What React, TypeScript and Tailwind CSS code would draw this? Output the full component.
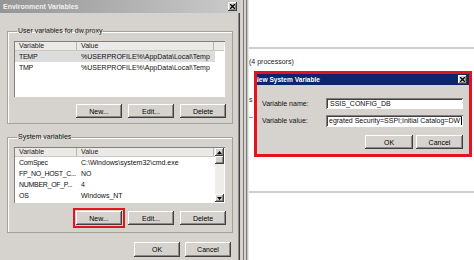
import React from 'react'

const face = 'bg-[#d6d3ce]'
const raised = 'shadow-[inset_-1px_-1px_#404040,inset_1px_1px_#fff,inset_-2px_-2px_#8a8a8a]'
const sunken = 'shadow-[inset_1px_1px_#808080,inset_-1px_-1px_#fff,inset_2px_2px_#404040]'

function Btn({ label, className = '' }: { label: string; className?: string }) {
  return (
    <div className={`flex h-[14px] w-[46px] shrink-0 items-center justify-center ${face} ${raised} text-[7px] leading-none text-black ${className}`}>
      {label}
    </div>
  )
}

function CloseBox({ className = '' }: { className?: string }) {
  return (
    <div className={`flex h-[9px] w-[9px] shrink-0 items-center justify-center ${face} ${raised} ${className}`}>
      <svg width="5" height="5" viewBox="0 0 5 5">
        <path d="M0 0L5 5M5 0L0 5" stroke="#000" strokeWidth="1.3" />
      </svg>
    </div>
  )
}

type Row = [string, string]

function ListView({ rows, selected = -1, scroll = false }: { rows: Row[]; selected?: number; scroll?: boolean }) {
  return (
    <div className="flex h-[56px] w-[211px] bg-white p-px shadow-[inset_1px_1px_#808080,inset_-1px_-1px_#fff]">
      <div className="flex min-w-0 flex-1 flex-col overflow-hidden">
        <div className="flex h-[9px] shrink-0 border-b border-[#c9c7c1] bg-[#eceae6] text-[7px] leading-[8px] text-[#222]">
          <div className="w-[62px] border-r border-[#b8b6b0] pl-[4px]">Variable</div>
          <div className="w-[137px] border-r border-[#b8b6b0] pl-[4px]">Value</div>
        </div>
        {rows.map((r, i) => (
          <div
            key={r[0]}
            className={`flex h-[11px] shrink-0 items-center text-[7px] leading-[10px] text-[#111] ${i === selected ? 'w-[200px] bg-[#dcdcdc]' : ''}`}
          >
            <div className="w-[62px] overflow-hidden whitespace-nowrap pl-[4px] tracking-[-0.3px]">{r[0]}</div>
            <div className="w-[137px] overflow-hidden whitespace-nowrap pl-[4px]">{r[1]}</div>
          </div>
        ))}
      </div>
      {scroll && (
        <div className="flex w-[9px] flex-col bg-[#efede9]">
          <div className={`flex h-[8px] items-center justify-center ${face} ${raised}`}>
            <svg width="5" height="3" viewBox="0 0 5 3"><path d="M2.5 0L5 3H0Z" fill="#000" /></svg>
          </div>
          <div className={`h-[8px] ${face} ${raised}`} />
          <div className="flex-1" />
          <div className={`flex h-[8px] items-center justify-center ${face} ${raised}`}>
            <svg width="5" height="3" viewBox="0 0 5 3"><path d="M0 0H5L2.5 3Z" fill="#000" /></svg>
          </div>
        </div>
      )}
    </div>
  )
}

function Group({ title, className = '', children }: { title: string; className?: string; children: React.ReactNode }) {
  return (
    <fieldset className={`ml-[7px] flex w-[226px] flex-col border border-[#a3a19b] px-[6px] shadow-[inset_1px_1px_#fff] ${className}`}>
      <legend className="ml-[3px] px-px text-[7px] leading-[8px] text-[#111]">{title}</legend>
      {children}
    </fieldset>
  )
}

function EnvDialog() {
  return (
    <div className={`flex h-[260px] w-[240px] shrink-0 flex-col ${face} shadow-[inset_-1px_0_#404040,inset_-2px_0_#8a8a8a]`}>
      <div className="flex h-[13px] shrink-0 items-center justify-between bg-linear-to-r from-[#959595] to-[#cbcbcb] pl-[3px] pr-[3px]">
        <span className="text-[7px] font-bold leading-none text-[#f0f0f0]">Environment Variables</span>
        <CloseBox />
      </div>

      <Group title="User variables for dw.proxy" className="mt-[14px] h-[97px]">
        <div className="mt-[6px]">
          <ListView
            rows={[
              ['TEMP', '%USERPROFILE%\\AppData\\Local\\Temp'],
              ['TMP', '%USERPROFILE%\\AppData\\Local\\Temp'],
            ]}
            selected={0}
          />
        </div>
        <div className="mt-[7px] flex justify-end gap-[6px]">
          <Btn label="New..." />
          <Btn label="Edit..." />
          <Btn label="Delete" />
        </div>
      </Group>

      <Group title="System variables" className="mt-[9px] h-[100px]">
        <div className="mt-[6px]">
          <ListView
            rows={[
              ['ComSpec', 'C:\\Windows\\system32\\cmd.exe'],
              ['FP_NO_HOST_C...', 'NO'],
              ['NUMBER_OF_P...', '4'],
              ['OS', 'Windows_NT'],
            ]}
            scroll
          />
        </div>
        <div className="mt-[8px] flex justify-end gap-[6px]">
          <Btn label="New..." className="outline-2 outline-offset-1 outline-[#e3131f]" />
          <Btn label="Edit..." />
          <Btn label="Delete" />
        </div>
      </Group>

      <div className="mt-[9px] flex justify-end gap-[5px] pr-[9px]">
        <Btn label="OK" className="h-[15px]" />
        <Btn label="Cancel" className="h-[15px]" />
      </div>
    </div>
  )
}

function WindowEdges() {
  return (
    <div className="flex h-[260px] shrink-0">
      <div className="w-[3px] bg-[#d6d3ce]" />
      <div className="w-px bg-[#7a7a7a]" />
      <div className="w-[2px] bg-[#d6d3ce]" />
      <div className="w-px bg-[#7a7a7a]" />
      <div className="w-px bg-[#c4c4c4]" />
      <div className="w-px bg-[#e8e8e8]" />
    </div>
  )
}

function NewVarDialog() {
  return (
    <div className="absolute left-[5px] top-[71px] h-[86px] w-[218px] border-[3px] border-[#e3131f] bg-[#d6d3ce]">
      <div className="flex h-[11px] items-center justify-between overflow-hidden bg-[#0c256c] pr-[2px]">
        <span className="-ml-[3px] whitespace-nowrap text-[6.6px] font-bold leading-[8px] text-white">New System Variable</span>
        <CloseBox />
      </div>
      <div className="flex flex-col pl-[5px] pr-[6px] text-[7px] leading-[10px] text-[#111]">
        <div className="mt-[13px] flex h-[11px] items-center">
          <span className="w-[64px]">Variable name:</span>
          <div className={`flex h-[11px] flex-1 items-center overflow-hidden bg-white pl-[4px] ${sunken}`}>SSIS_CONFIG_DB</div>
        </div>
        <div className="mt-[6px] flex h-[12px] items-center">
          <span className="w-[64px]">Variable value:</span>
          <div className={`flex h-[12px] flex-1 items-center overflow-hidden whitespace-nowrap bg-white pl-[3px] ${sunken}`}>
            egrated Security=SSPI;Initial Catalog=DW
            <span className="ml-px h-[8px] w-px bg-black" />
          </div>
        </div>
        <div className="mt-[8px] flex justify-end gap-[3px]">
          <Btn label="OK" className="w-[48px]" />
          <Btn label="Cancel" className="w-[47px]" />
        </div>
      </div>
    </div>
  )
}

function App(): React.ReactElement {
  return (
    <div className="flex h-[260px] w-[474px] overflow-hidden bg-white font-['Liberation_Sans',Arial,sans-serif]">
      <EnvDialog />
      <WindowEdges />
      <div className="relative flex flex-1 flex-col">
        <div className="mt-[47px] h-[2px] bg-[#cfcfcf]" />
        <div className="mt-[9px] text-[7px] leading-none text-[#222]">(4 processors)</div>
        <div className="mt-[31px] text-[7px] leading-none text-[#222]">s</div>
        <div className="mt-[14px] h-px w-[4px] bg-[#999]" />
        <div className="mt-[73px] h-[2px] bg-[#cfcfcf]" />
        <NewVarDialog />
      </div>
    </div>
  )
}

export default App
